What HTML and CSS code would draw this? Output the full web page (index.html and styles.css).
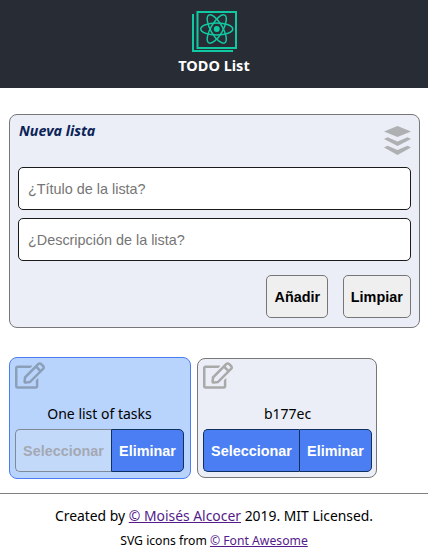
FILE: index.html

```html
<!DOCTYPE html>
<html lang="en">
<head>
    <meta charset="UTF-8">
    <meta name="viewport" content="width=device-width, initial-scale=1.0">
    <title>TODO List</title>
    <link rel="stylesheet" href="styles.css">
</head>
<body>
    <header class="app-header">
        <svg class="logo" width="46" height="41" viewBox="0 0 46 41" fill="none" stroke="#10c9a2">
            <path d="M1 3V40H41" stroke-width="2"/>
            <rect x="5.5" y="1" width="38.5" height="36" stroke-width="2"/>
            <g stroke-width="1.5">
                <ellipse cx="24.75" cy="18" rx="16" ry="6"/>
                <ellipse cx="24.75" cy="18" rx="16" ry="6" transform="rotate(60 24.75 18)"/>
                <ellipse cx="24.75" cy="18" rx="16" ry="6" transform="rotate(120 24.75 18)"/>
            </g>
            <circle cx="24.75" cy="18" r="3" fill="#10c9a2" stroke="none"/>
        </svg>
        <h1 class="app-title">TODO List</h1>
    </header>

    <section class="new-list">
        <div class="new-list-head">
            <h2>Nueva lista</h2>
            <svg class="layers" viewBox="0 0 27 29"><path d="M0 5.5L13.5 0L27 5.5L13.5 11ZM0 13L3.5 11.2L13.5 15.5L23.5 11.2L27 13L13.5 20ZM0 21.5L3.5 19.7L13.5 24L23.5 19.7L27 21.5L13.5 29Z"/></svg>
        </div>
        <input class="field" type="text" placeholder="¿Título de la lista?">
        <input class="field" type="text" placeholder="¿Descripción de la lista?">
        <div class="form-actions">
            <button type="button" class="plain-btn">Añadir</button>
            <button type="button" class="plain-btn">Limpiar</button>
        </div>
    </section>

    <section class="lists">
        <div class="card card-selected">
            <svg class="edit" viewBox="0 0 576 512"><path d="M402.3 344.9l32-32c5-5 13.7-1.5 13.7 5.7V464c0 26.5-21.5 48-48 48H48c-26.5 0-48-21.5-48-48V112c0-26.5 21.5-48 48-48h273.5c7.1 0 10.7 8.6 5.7 13.7l-32 32c-1.5 1.5-3.5 2.3-5.7 2.3H48v352h352V350.5c0-2.1.8-4.1 2.3-5.6zm156.6-201.8L296.3 405.7l-90.4 10c-26.2 2.9-48.5-19.2-45.6-45.6l10-90.4L432.9 17.1c22.9-22.9 59.9-22.9 82.7 0l43.2 43.2c22.9 22.9 22.9 60 .1 82.8zM460.1 174L402 115.9 216.2 301.8l-7.3 65.3 65.3-7.3L460.1 174zm64.8-79.7l-43.2-43.2c-4.1-4.1-10.8-4.1-14.8 0L436 82l58.1 58.1 30.9-30.9c4-4.2 4-10.8-.1-14.9z"/></svg>
            <p class="card-name">One list of tasks</p>
            <div class="btn-group">
                <button type="button" class="seg seg-off" disabled>Seleccionar</button>
                <button type="button" class="seg">Eliminar</button>
            </div>
        </div>
        <div class="card">
            <svg class="edit" viewBox="0 0 576 512"><path d="M402.3 344.9l32-32c5-5 13.7-1.5 13.7 5.7V464c0 26.5-21.5 48-48 48H48c-26.5 0-48-21.5-48-48V112c0-26.5 21.5-48 48-48h273.5c7.1 0 10.7 8.6 5.7 13.7l-32 32c-1.5 1.5-3.5 2.3-5.7 2.3H48v352h352V350.5c0-2.1.8-4.1 2.3-5.6zm156.6-201.8L296.3 405.7l-90.4 10c-26.2 2.9-48.5-19.2-45.6-45.6l10-90.4L432.9 17.1c22.9-22.9 59.9-22.9 82.7 0l43.2 43.2c22.9 22.9 22.9 60 .1 82.8zM460.1 174L402 115.9 216.2 301.8l-7.3 65.3 65.3-7.3L460.1 174zm64.8-79.7l-43.2-43.2c-4.1-4.1-10.8-4.1-14.8 0L436 82l58.1 58.1 30.9-30.9c4-4.2 4-10.8-.1-14.9z"/></svg>
            <p class="card-name">b177ec</p>
            <div class="btn-group">
                <button type="button" class="seg">Seleccionar</button>
                <button type="button" class="seg">Eliminar</button>
            </div>
        </div>
    </section>

    <footer class="app-footer">
        <p class="credit">Created by <a href="#">© Moisés Alcocer</a> 2019. MIT Licensed.</p>
        <p class="credit-small">SVG icons from <a href="#">© Font Awesome</a></p>
    </footer>
</body>
</html>
```

FILE: styles.css

```css
body { margin: 0; background: white; color: #000; font-family: "Noto Sans", "Open Sans", sans-serif; overflow: hidden; }
p, h1, h2 { margin: 0; }
a { color: #551a8b; }

.app-header { height: 88px; background: #282c34; display: flex; flex-direction: column; align-items: center; padding-top: 11px; box-sizing: border-box; }
.logo { display: block; margin-left: 2px; }
.app-title { margin-top: 4px; color: white; font-size: 14.5px; line-height: 18px; font-weight: 700; }

.new-list { margin: 26px 8px 0 9px; height: 214px; box-sizing: border-box; padding: 0 8px; background: #ebeef7; border: 1px solid #777; border-radius: 8px; }
.new-list-head { height: 52px; display: flex; justify-content: space-between; align-items: flex-start; }
.new-list-head h2 { margin: 7px 0 0 1px; font-size: 14.3px; line-height: 18px; font-style: italic; font-weight: 700; color: #0b2458; }
.layers { width: 27px; height: 29px; margin: 11px 0 0 0; fill: #aeb0b2; }

.field { display: block; width: 100%; height: 43px; box-sizing: border-box; margin-bottom: 8px; padding: 0 9px; background: white; border: 1px solid #1a1a1a; border-radius: 5px; font-family: "Liberation Sans", Arial, sans-serif; font-size: 14.4px; }
.field::placeholder { color: #757575; }

.form-actions { display: flex; justify-content: flex-end; gap: 14.4px; margin-top: 14px; }
.plain-btn { height: 43px; padding: 0 7.2px; background: #efefef; border: 1px solid #767676; border-radius: 5px; color: #000; font-family: "Liberation Sans", Arial, sans-serif; font-size: 14.4px; font-weight: 700; }

.lists { display: flex; align-items: flex-start; gap: 6px; margin: 29px 0 0 9px; }
.card { width: 180px; height: 120px; margin-top: 1px; box-sizing: border-box; padding: 3px 4px 0 5px; background: #ebeef7; border: 1px solid #777; border-radius: 8px; display: flex; flex-direction: column; }
.card-selected { width: 182px; height: 122px; margin-top: 0; padding: 4px 6px 0 5px; background: #b8d4fd; border-color: #4a7df0; }
.edit { display: block; width: 30px; height: 27px; fill: #a9a9a9; }
.card-selected .edit { fill: #8c9fb8; }
.card-name { margin-top: 15px; text-align: center; font-size: 14px; line-height: 20px; }
.btn-group { display: flex; height: 43px; margin-top: 5px; }

.seg { flex: 1 1 auto; padding: 0 7px; background: #4a7ef2; border: 1px solid #10305f; color: white; font-family: "Liberation Sans", Arial, sans-serif; font-size: 14.4px; font-weight: 700; }
.seg:first-child { border-radius: 5px 0 0 5px; border-right: none; }
.seg:last-child { border-radius: 0 5px 5px 0; }
.seg-off { background: #c3d9fa; border-color: #7f8a99; color: #a3a9b3; }

.app-footer { margin-top: 14px; border-top: 1px solid #808080; text-align: center; }
.credit { margin-top: 12px; font-size: 13.9px; line-height: 20px; }
.credit-small { margin-top: 6px; font-size: 12.2px; line-height: 18px; }
```
